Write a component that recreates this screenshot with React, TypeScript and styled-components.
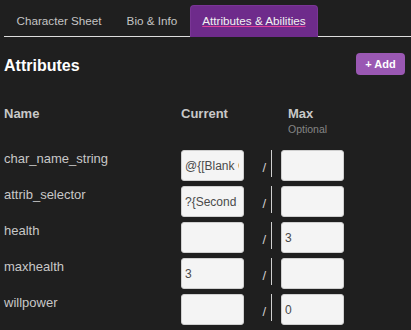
import React from "react";
import styled, { createGlobalStyle } from "styled-components";

const GlobalStyle = createGlobalStyle`
  html, body {
    margin: 0;
    padding: 0;
    background: #1f1f1f;
  }
  body {
    font-family: "Liberation Sans", Arial, Helvetica, sans-serif;
    color: #cccccc;
  }
`;

const Page = styled.div`
  padding: 5px 0 0 4px;
  width: 407px;
  height: 325px;
  overflow: hidden;
`;

const TabBar = styled.ul`
  display: flex;
  list-style: none;
  margin: 0;
  padding: 0;
  border-bottom: 1px solid #dddddd;
`;

const Tab = styled.li<{ $active?: boolean }>`
  margin-bottom: -1px;
  padding: 6px 11.5px;
  font-size: 11.7px;
  line-height: 18px;
  border: 1px solid ${(p) => (p.$active ? "#7a3596" : "transparent")};
  border-bottom-color: transparent;
  border-radius: 4px 4px 0 0;
  background: ${(p) => (p.$active ? "#6e2b8b" : "transparent")};
  color: ${(p) => (p.$active ? "#f2f2f2" : "#c4c4c4")};
  white-space: nowrap;

  span {
    text-decoration: ${(p) => (p.$active ? "underline" : "none")};
    text-decoration-color: #e0409a;
    text-underline-offset: 1px;
  }
`;

const SectionHead = styled.div`
  display: flex;
  justify-content: space-between;
  align-items: flex-start;
  margin-top: 16px;
  padding-right: 6px;
`;

const Title = styled.h2`
  margin: 2px 0 0;
  font-size: 16px;
  line-height: 22px;
  font-weight: 700;
  color: #ffffff;
`;

const AddButton = styled.button`
  height: 22px;
  width: 49px;
  padding: 0;
  border: none;
  border-radius: 4px;
  background: #9a58b3;
  color: #ffffff;
  font-family: inherit;
  font-size: 11px;
  font-weight: 700;
`;

const Table = styled.div`
  margin-top: 29px;
  display: flex;
  flex-direction: column;
  gap: 5px;
`;

const Row = styled.div<{ $header?: boolean }>`
  display: grid;
  grid-template-columns: 177px 63px 28px 1fr;
  align-items: start;
  margin-bottom: ${(p) => (p.$header ? "9px" : "0")};
`;

const HeadCell = styled.div<{ $indent?: number }>`
  font-size: 13px;
  line-height: 16px;
  font-weight: 700;
  color: #c8c8c8;
  padding-left: ${(p) => p.$indent ?? 0}px;
`;

const Hint = styled.div`
  font-size: 10.5px;
  line-height: 14px;
  font-weight: 400;
  color: #858585;
`;

const Label = styled.div`
  padding-top: 1px;
  font-size: 13px;
  line-height: 16px;
  color: #c8c8c8;
`;

const Field = styled.input`
  box-sizing: border-box;
  width: 63px;
  height: 31px;
  margin: 0;
  padding: 0 4px 0 3px;
  border: 1px solid #cfcfcf;
  border-radius: 3px;
  background: #f4f4f4;
  color: #4a4a4a;
  font-family: inherit;
  font-size: 12px;
  outline: none;
`;

const Divider = styled.div`
  box-sizing: border-box;
  height: 27px;
  padding: 7px 5px 0 0;
  display: flex;
  align-items: center;
  justify-content: flex-end;
  border-right: 1px solid #d0d0d0;
  font-size: 13px;
  line-height: 13px;
  color: #cfcfcf;
`;

const MaxCell = styled.div`
  padding-left: 9px;
`;

type Attr = { name: string; current: string; max: string };

const attrs: Attr[] = [
  { name: "char_name_string", current: "@{[Blank Character]|character_name}", max: "" },
  { name: "attrib_selector", current: "?{Second Attribute|Strength}", max: "" },
  { name: "health", current: "", max: "3" },
  { name: "maxhealth", current: "3", max: "" },
  { name: "willpower", current: "", max: "0" },
];

export default function App() {
  return (
    <Page>
      <GlobalStyle />
      <TabBar>
        <Tab>
          <span>Character Sheet</span>
        </Tab>
        <Tab>
          <span>Bio &amp; Info</span>
        </Tab>
        <Tab $active>
          <span>Attributes &amp; Abilities</span>
        </Tab>
      </TabBar>

      <SectionHead>
        <Title>Attributes</Title>
        <AddButton>+ Add</AddButton>
      </SectionHead>

      <Table>
        <Row $header>
          <HeadCell>Name</HeadCell>
          <HeadCell>Current</HeadCell>
          <div />
          <HeadCell $indent={16}>
            Max
            <Hint>Optional</Hint>
          </HeadCell>
        </Row>
        {attrs.map((a) => (
          <Row key={a.name}>
            <Label>{a.name}</Label>
            <Field readOnly value={a.current} />
            <Divider>/</Divider>
            <MaxCell>
              <Field readOnly value={a.max} />
            </MaxCell>
          </Row>
        ))}
      </Table>
    </Page>
  );
}
